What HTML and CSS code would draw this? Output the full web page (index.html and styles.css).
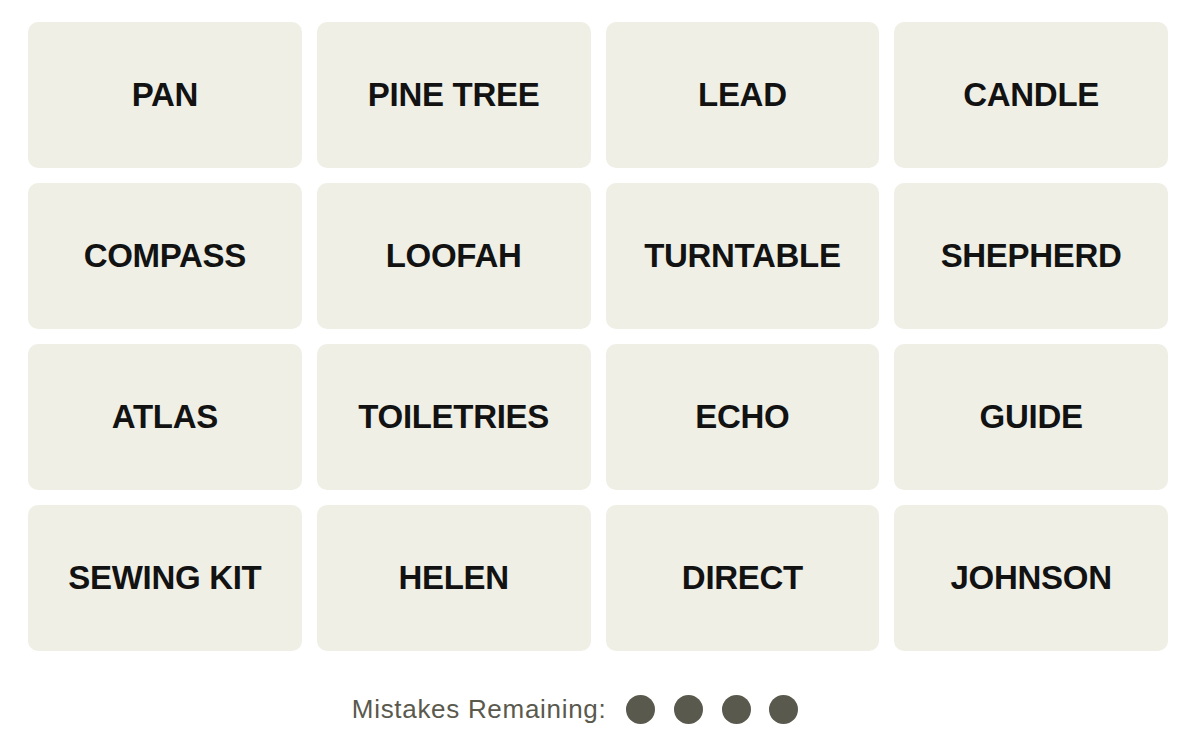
FILE: index.html
```html
<!DOCTYPE html>
<html lang="en">
<head>
<meta charset="utf-8">
<title>Connections</title>
<link rel="stylesheet" href="styles.css">
</head>
<body>
<main class="game">
  <section class="board">
    <div class="tile">PAN</div>
    <div class="tile">PINE TREE</div>
    <div class="tile">LEAD</div>
    <div class="tile">CANDLE</div>
    <div class="tile">COMPASS</div>
    <div class="tile">LOOFAH</div>
    <div class="tile">TURNTABLE</div>
    <div class="tile">SHEPHERD</div>
    <div class="tile">ATLAS</div>
    <div class="tile">TOILETRIES</div>
    <div class="tile">ECHO</div>
    <div class="tile">GUIDE</div>
    <div class="tile">SEWING KIT</div>
    <div class="tile">HELEN</div>
    <div class="tile">DIRECT</div>
    <div class="tile">JOHNSON</div>
  </section>
  <div class="mistakes">
    <span class="mistakes-label">Mistakes Remaining:</span>
    <span class="dots">
      <span class="dot"></span>
      <span class="dot"></span>
      <span class="dot"></span>
      <span class="dot"></span>
    </span>
  </div>
</main>
</body>
</html>
```

FILE: styles.css
```css
html, body {
  margin: 0;
  padding: 0;
  background: #ffffff;
}

body {
  font-family: "Liberation Sans", Arial, sans-serif;
  color: #121212;
}

.game {
  padding: 21.5px 0 0 28px;
  width: 1140px;
}

.board {
  display: grid;
  grid-template-columns: repeat(4, 1fr);
  grid-auto-rows: 146px;
  gap: 15px;
}

.tile {
  background: #efefe6;
  border-radius: 10px;
  display: flex;
  align-items: center;
  justify-content: center;
  font-weight: 700;
  font-size: 33px;
  letter-spacing: -0.3px;
  color: #121212;
  text-transform: uppercase;
}

.mistakes {
  display: flex;
  align-items: center;
  justify-content: center;
  margin-top: 44px;
  padding-right: 46px;
  height: 29px;
}

.mistakes-label {
  font-size: 26px;
  letter-spacing: 0.7px;
  color: #5a594e;
  margin-right: 20px;
  line-height: 29px;
}

.dots {
  display: flex;
  gap: 18.6px;
}

.dot {
  width: 29px;
  height: 29px;
  border-radius: 50%;
  background: #5a594e;
}
```
